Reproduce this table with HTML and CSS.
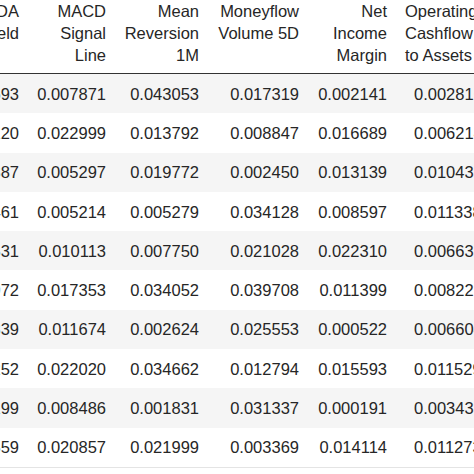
FILE: index.html
```html
<!DOCTYPE html>
<html>
<head>
<meta charset="utf-8">
<link rel="stylesheet" href="styles.css">
</head>
<body>
<div class="frame">
<table class="df">
<colgroup>
<col class="c0"><col class="c1"><col class="c2"><col class="c3"><col class="c4"><col class="c5">
</colgroup>
<thead>
<tr>
<th>EBITDA<br>Yield</th>
<th>MACD<br>Signal<br>Line</th>
<th>Mean<br>Reversion<br>1M</th>
<th>Moneyflow<br>Volume 5D</th>
<th>Net<br>Income<br>Margin</th>
<th class="left">Operating<br>Cashflow<br>to Assets</th>
</tr>
</thead>
<tbody>
<tr><td>0.014693</td><td>0.007871</td><td>0.043053</td><td>0.017319</td><td>0.002141</td><td>0.002816</td></tr>
<tr><td>0.007120</td><td>0.022999</td><td>0.013792</td><td>0.008847</td><td>0.016689</td><td>0.006214</td></tr>
<tr><td>0.010387</td><td>0.005297</td><td>0.019772</td><td>0.002450</td><td>0.013139</td><td>0.010435</td></tr>
<tr><td>0.003461</td><td>0.005214</td><td>0.005279</td><td>0.034128</td><td>0.008597</td><td>0.011338</td></tr>
<tr><td>0.021531</td><td>0.010113</td><td>0.007750</td><td>0.021028</td><td>0.022310</td><td>0.006637</td></tr>
<tr><td>0.004972</td><td>0.017353</td><td>0.034052</td><td>0.039708</td><td>0.011399</td><td>0.008221</td></tr>
<tr><td>0.012839</td><td>0.011674</td><td>0.002624</td><td>0.025553</td><td>0.000522</td><td>0.006604</td></tr>
<tr><td>0.008252</td><td>0.022020</td><td>0.034662</td><td>0.012794</td><td>0.015593</td><td>0.011529</td></tr>
<tr><td>0.016199</td><td>0.008486</td><td>0.001831</td><td>0.031337</td><td>0.000191</td><td>0.003438</td></tr>
<tr><td>0.005559</td><td>0.020857</td><td>0.021999</td><td>0.003369</td><td>0.014114</td><td>0.011273</td></tr>
</tbody>
</table>
</div>
</body>
</html>
```
FILE: styles.css
```css
html, body {
  margin: 0;
  padding: 0;
  background: #ffffff;
  overflow: hidden;
}
.frame {
  width: 474px;
  height: 474px;
  overflow: hidden;
}
.df {
  margin-left: -72px;
  border-collapse: collapse;
  table-layout: fixed;
  width: 564px;
  font-family: "Liberation Sans", Arial, sans-serif;
  font-size: 16.5px;
  color: #262626;
}
.c0 { width: 100px; }
.c1 { width: 87px; }
.c2 { width: 93px; }
.c3 { width: 100px; }
.c4 { width: 88px; }
.c5 { width: 96px; }
.df th {
  font-weight: normal;
  text-align: right;
  vertical-align: top;
  line-height: 22px;
  padding: 0 9px 7px 0;
  white-space: nowrap;
}
.df th.left {
  text-align: left;
  padding-left: 9px;
}
.df thead tr {
  border-bottom: 1px solid #333333;
}
.df td {
  text-align: right;
  padding: 0 9px 0 0;
  height: 39.3px;
  line-height: 20px;
  white-space: nowrap;
}
.df td:last-child {
  text-align: left;
  padding-left: 18px;
}
.df tbody tr:nth-child(odd) {
  background: #f5f5f5;
}
.df tbody tr:last-child {
  border-bottom: 1px solid #e4e4e4;
}
```
